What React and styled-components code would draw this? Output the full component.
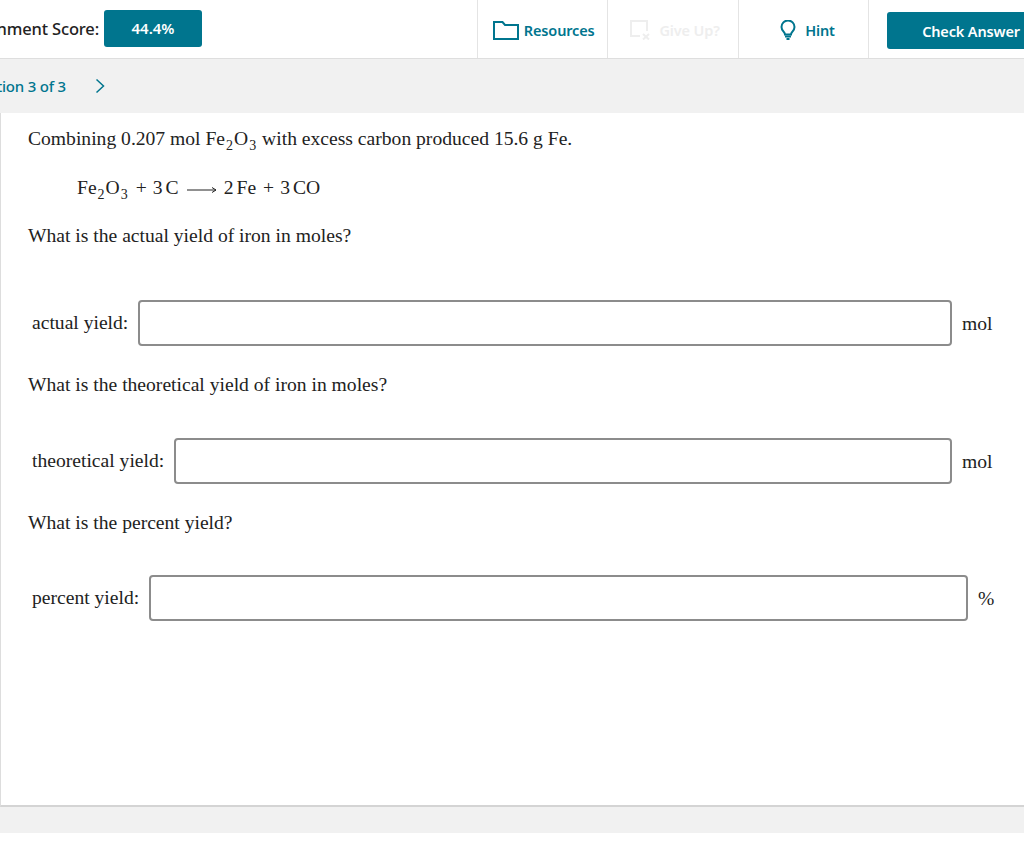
import React from "react"
import styled, { createGlobalStyle } from "styled-components"

const teal = "#00758e"

const GlobalStyle = createGlobalStyle`
  html, body {
    margin: 0;
    padding: 0;
    background: #fff;
    overflow: hidden;
  }
`

const FolderIcon = () => (
  <svg width="26" height="20" viewBox="0 0 26 20" fill="none" stroke={teal} strokeWidth="2">
    <path d="M1 19V2h8.500l2.500 3h13v14z" />
  </svg>
)

const GiveUpIcon = () => (
  <svg width="20" height="20" viewBox="0 0 20 20" fill="none" stroke="#eeeeee" strokeWidth="2">
    <path d="M10 16H1V1h16v10" />
    <path d="M13 14l6 5.500M19 14l-6 5.500" />
  </svg>
)

const BulbIcon = () => (
  <svg width="16" height="20" viewBox="0 0 16 20" fill="none" stroke={teal} strokeWidth="2">
    <path d="M5 14.500c0-2.500-3.500-3.500-3.500-7.500a6.500 6.500 0 0 1 13 0c0 4-3.500 5-3.500 7.500z" />
    <path d="M5 16.500h6M6.500 19h3" />
  </svg>
)

const ChevronIcon = () => (
  <svg width="10" height="16" viewBox="0 0 10 16" fill="none" stroke={teal} strokeWidth="1.500">
    <path d="M1.500 1.500L8.500 8l-7 6.500" />
  </svg>
)

const ReactionArrow = () => (
  <svg width="30" height="8" viewBox="0 0 30 8" fill="none" stroke="#222" strokeWidth="1">
    <path d="M0 4h29M25 1.500L29 4l-4 2.500" />
  </svg>
)

const actions = [
  { label: "Resources", icon: <FolderIcon />, gap: 5, offset: 2 },
  { label: "Give Up?", icon: <GiveUpIcon />, gap: 9, offset: 4, disabled: true },
  { label: "Hint", icon: <BulbIcon />, gap: 9, offset: 8 },
]

export default function App() {
  return (
    <Page>
      <GlobalStyle />
      <Header>
        <ScoreGroup>
          <ScoreLabel>Assignment Score:</ScoreLabel>
          <ScoreBadge>44.4%</ScoreBadge>
        </ScoreGroup>
        <Actions>
          {actions.map((item) => (
            <ActionCell
              key={item.label}
              $disabled={item.disabled}
              $gap={item.gap}
              $offset={item.offset}
            >
              {item.icon}
              {item.label}
            </ActionCell>
          ))}
        </Actions>
        <CheckWrap>
          <CheckButton>Check Answer</CheckButton>
        </CheckWrap>
      </Header>
      <Pager>
        <PagerLabel>Question 3 of 3</PagerLabel>
        <ChevronIcon />
      </Pager>
      <Card>
        <Paragraph>
          Combining 0.207 mol Fe<Sub>2</Sub>O<Sub>3</Sub> with excess carbon produced 15.6 g Fe.
        </Paragraph>
        <Equation>
          Fe<Sub>2</Sub>O<Sub>3</Sub>
          <Plus>+</Plus>3<Thin />C<ArrowWrap><ReactionArrow /></ArrowWrap>2<Thin />Fe<Plus>+</Plus>3<Thin />CO
        </Equation>
        <Paragraph $top={24}>What is the actual yield of iron in moles?</Paragraph>
        <AnswerRow $top={52}>
          <AnswerLabel>actual yield:</AnswerLabel>
          <AnswerInput />
          <Unit $width={31}>mol</Unit>
        </AnswerRow>
        <Paragraph $top={27}>What is the theoretical yield of iron in moles?</Paragraph>
        <AnswerRow $top={41}>
          <AnswerLabel>theoretical yield:</AnswerLabel>
          <AnswerInput />
          <Unit $width={31}>mol</Unit>
        </AnswerRow>
        <Paragraph $top={27}>What is the percent yield?</Paragraph>
        <AnswerRow $top={40}>
          <AnswerLabel>percent yield:</AnswerLabel>
          <AnswerInput />
          <Unit $width={15}>%</Unit>
        </AnswerRow>
      </Card>
      <Footer />
    </Page>
  )
}

const Page = styled.div`
  width: 1024px;
  height: 866px;
  overflow: hidden;
  background: #fff;
  font-family: "Noto Sans", sans-serif;
`
const Header = styled.header`
  display: flex;
  height: 58px;
  border-bottom: 1px solid #dedede;
  background: #fff;
`
const ScoreGroup = styled.div`
  display: flex;
  justify-content: flex-end;
  align-items: center;
  gap: 5px;
  width: 202px;
  padding-bottom: 1px;
  overflow: hidden;
  flex-shrink: 0;
  white-space: nowrap;
`
const ScoreLabel = styled.span`
  flex-shrink: 0;
  font-size: 16.500px;
  font-weight: 500;
  letter-spacing: -0.150px;
  color: #222;
`
const ScoreBadge = styled.div`
  flex: 0 0 98px;
  height: 37px;
  line-height: 37px;
  text-align: center;
  border-radius: 3px;
  background: ${teal};
  color: #fff;
  font-size: 15px;
  font-weight: 600;
`
const Actions = styled.nav`
  display: flex;
  margin-left: 275px;
  border-right: 1px solid #e4e4e4;
`
const ActionCell = styled.div`
  display: flex;
  align-items: center;
  justify-content: center;
  gap: ${({ $gap }) => $gap}px;
  box-sizing: border-box;
  width: 130.400px;
  padding: 1px 0 0 ${({ $offset }) => $offset}px;
  border-left: 1px solid #e4e4e4;
  font-size: 14.500px;
  font-weight: 600;
  letter-spacing: -0.150px;
  color: ${({ $disabled }) => ($disabled ? "#eeeeee" : teal)};
`
const CheckWrap = styled.div`
  flex: 1;
  padding: 12px 0 9px 18px;
  min-width: 0;
`
const CheckButton = styled.button`
  width: 160px;
  height: 37px;
  padding: 0 0 0 35px;
  text-align: left;
  border: none;
  border-radius: 3px;
  background: ${teal};
  color: #fff;
  font-family: inherit;
  font-size: 14.500px;
  font-weight: 600;
  letter-spacing: -0.150px;
  white-space: nowrap;
`
const Pager = styled.div`
  display: flex;
  align-items: center;
  height: 54px;
  background: #f1f1f1;
`
const PagerLabel = styled.div`
  display: flex;
  justify-content: flex-end;
  width: 66px;
  margin: 0 29px 1px 0;
  overflow: hidden;
  white-space: nowrap;
  flex-shrink: 0;
  font-size: 15px;
  font-weight: 500;
  letter-spacing: -0.200px;
  color: ${teal};
`
const Card = styled.main`
  height: 694px;
  padding: 14px 31px 0 27px;
  box-sizing: border-box;
  background: #fff;
  border-left: 1px solid #dddddd;
  border-bottom: 2px solid #d4d4d4;
  font-family: "Liberation Serif", serif;
  font-size: 19.600px;
  color: #222;
`
const Sub = styled.span`
  position: relative;
  top: 5px;
  margin: 0 1px;
  font-size: 14px;
  line-height: 0;
`
const Paragraph = styled.p`
  margin: ${({ $top }) => $top || 0}px 0 0;
  line-height: 24px;
`
const Equation = styled.div`
  display: flex;
  align-items: baseline;
  margin: 25px 0 0 49px;
  height: 24px;
  line-height: 24px;
  white-space: pre;
`
const Plus = styled.span`
  margin: 0 6px 0 7px;
`
const Thin = styled.span`
  width: 3px;
`
const ArrowWrap = styled.span`
  margin: 0 7px 0 8px;
`
const AnswerRow = styled.div`
  display: flex;
  align-items: center;
  margin: ${({ $top }) => $top}px 0 0 4px;
`
const AnswerLabel = styled.label`
  margin-right: 10px;
  white-space: nowrap;
`
const AnswerInput = styled.div`
  flex: 1;
  height: 46px;
  box-sizing: border-box;
  background: #fff;
  border: 2px solid #8c8c8c;
  border-radius: 4px;
`
const Unit = styled.span`
  width: ${({ $width }) => $width}px;
  margin-left: 10px;
  padding-top: 2px;
`
const Footer = styled.div`
  height: 26px;
  background: #f1f1f1;
`
